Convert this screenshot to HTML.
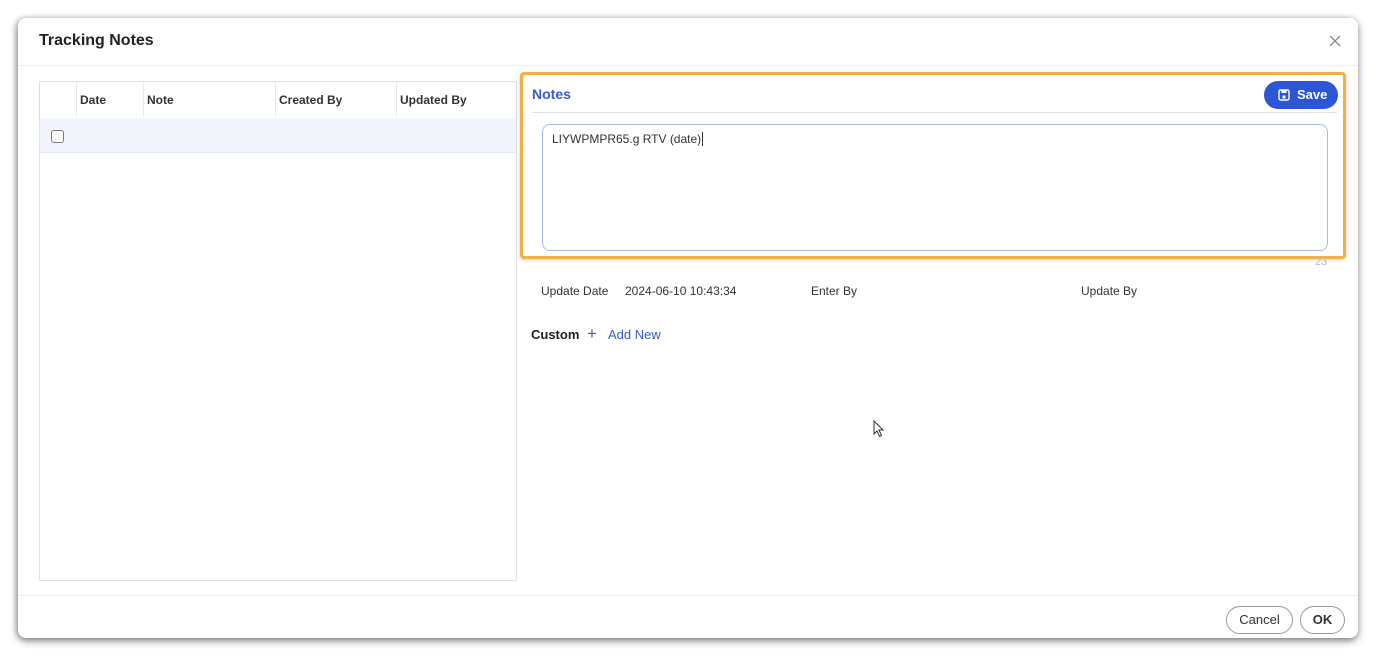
<!DOCTYPE html>
<html><head><style>
*{box-sizing:border-box;margin:0;padding:0}
body{width:1376px;height:657px;background:#fff;font-family:"Liberation Sans",sans-serif;position:relative;overflow:hidden;color:#222}
.dlg{position:absolute;left:18px;top:18px;width:1340px;height:620px;background:#fff;border-radius:8px;box-shadow:0 3px 8px rgba(0,0,0,.45),-2px 0 6px rgba(0,0,0,.2)}
.abs{position:absolute}
.t{font-size:12px;color:#333}
</style></head><body>
<div class="dlg">
<div class="abs" style="left:21px;top:14px;font-size:16px;font-weight:bold;color:#222">Tracking Notes</div>
<svg class="abs" style="left:1310px;top:16px" width="14" height="14" viewBox="0 0 14 14"><path d="M2 2L12 12M12 2L2 12" stroke="#888" stroke-width="1.3"/></svg>
<div class="abs" style="left:0;top:47px;width:1340px;height:1px;background:#eee"></div>
<div class="abs" style="left:0;top:577px;width:1340px;height:1px;background:#eee"></div>
<!-- table -->
<div class="abs" style="left:21px;top:63px;width:478px;height:500px;border:1px solid #e2e2e2"></div>
<div class="abs" style="left:22px;top:64px;width:476px;height:36px;box-shadow:0 2px 3px rgba(0,0,0,.08)"></div>
<div class="abs" style="left:58px;top:64px;width:1px;height:35px;background:#eaeaea"></div>
<div class="abs" style="left:125px;top:64px;width:1px;height:35px;background:#eaeaea"></div>
<div class="abs" style="left:257px;top:64px;width:1px;height:35px;background:#eaeaea"></div>
<div class="abs" style="left:378px;top:64px;width:1px;height:35px;background:#eaeaea"></div>
<div class="abs t" style="left:62px;top:75px;font-weight:bold;font-size:12px">Date</div>
<div class="abs t" style="left:129px;top:75px;font-weight:bold">Note</div>
<div class="abs t" style="left:261px;top:75px;font-weight:bold">Created By</div>
<div class="abs t" style="left:382px;top:75px;font-weight:bold">Updated By</div>
<div class="abs" style="left:22px;top:100px;width:476px;height:35px;background:#f2f5fb;border-bottom:1px solid #e4e8f0"></div>
<div class="abs" style="left:33px;top:112px;width:13px;height:13px;border:1.5px solid #777;border-radius:3px;background:#fff"></div>
<!-- notes box -->
<div class="abs" style="left:502px;top:54px;width:826px;height:187px;border:3px solid #f0b048;border-radius:4px;box-shadow:0 1px 3px rgba(0,0,0,.2)"></div>
<div class="abs" style="left:514px;top:68px;font-size:14px;font-weight:bold;color:#3b5bcc">Notes</div>
<div class="abs" style="left:514px;top:94px;width:805px;height:1px;background:#e3e3e3"></div>
<div class="abs" style="left:1246px;top:63px;width:74px;height:28px;background:#2b56d8;border-radius:14px;color:#fff;font-size:13px;font-weight:bold;line-height:28px;padding-left:33px">Save</div>
<svg class="abs" style="left:1260px;top:71px" width="12" height="12" viewBox="0 0 12 12"><rect x="1" y="1" width="10" height="10" rx="1.5" fill="none" stroke="#fff" stroke-width="1.4"/><rect x="3.5" y="1" width="5" height="3" fill="#fff"/><rect x="4.5" y="6.5" width="3" height="3" fill="#fff"/></svg>
<div class="abs" style="left:524px;top:106px;width:786px;height:127px;border:1.5px solid #a9b9ee;border-radius:8px"></div>
<div class="abs t" style="left:534px;top:114px">LIYWPMPR65.g RTV (date)<span style="border-left:1px solid #333;margin-left:1px"></span></div>
<div class="abs" style="left:1297px;top:238px;font-size:11px;color:#bbb">23</div>
<div class="abs t" style="left:523px;top:266px">Update Date</div>
<div class="abs t" style="left:607px;top:266px">2024-06-10 10:43:34</div>
<div class="abs t" style="left:793px;top:266px">Enter By</div>
<div class="abs t" style="left:1063px;top:266px">Update By</div>
<div class="abs" style="left:513px;top:309px;font-size:13px;font-weight:bold">Custom</div>
<div class="abs" style="left:569px;top:306px;font-size:17px;color:#3b5bcc">+</div>
<div class="abs" style="left:590px;top:309px;font-size:13px;color:#3b5bcc">Add New</div>
<svg class="abs" style="left:855px;top:402px" width="12" height="18" viewBox="0 0 12 18"><path d="M1 1V14L4 11L6.5 16.5L8.5 15.5L6 10H10Z" fill="#fff" stroke="#333" stroke-width="1"/></svg>
<div class="abs" style="left:1208px;top:588px;width:67px;height:28px;border:1px solid #999;border-radius:14px;text-align:center;line-height:26px;font-size:13px;color:#333">Cancel</div>
<div class="abs" style="left:1282px;top:588px;width:45px;height:28px;border:1px solid #999;border-radius:14px;text-align:center;line-height:26px;font-size:13px;font-weight:bold;color:#333">OK</div>
</div>
</body></html>
